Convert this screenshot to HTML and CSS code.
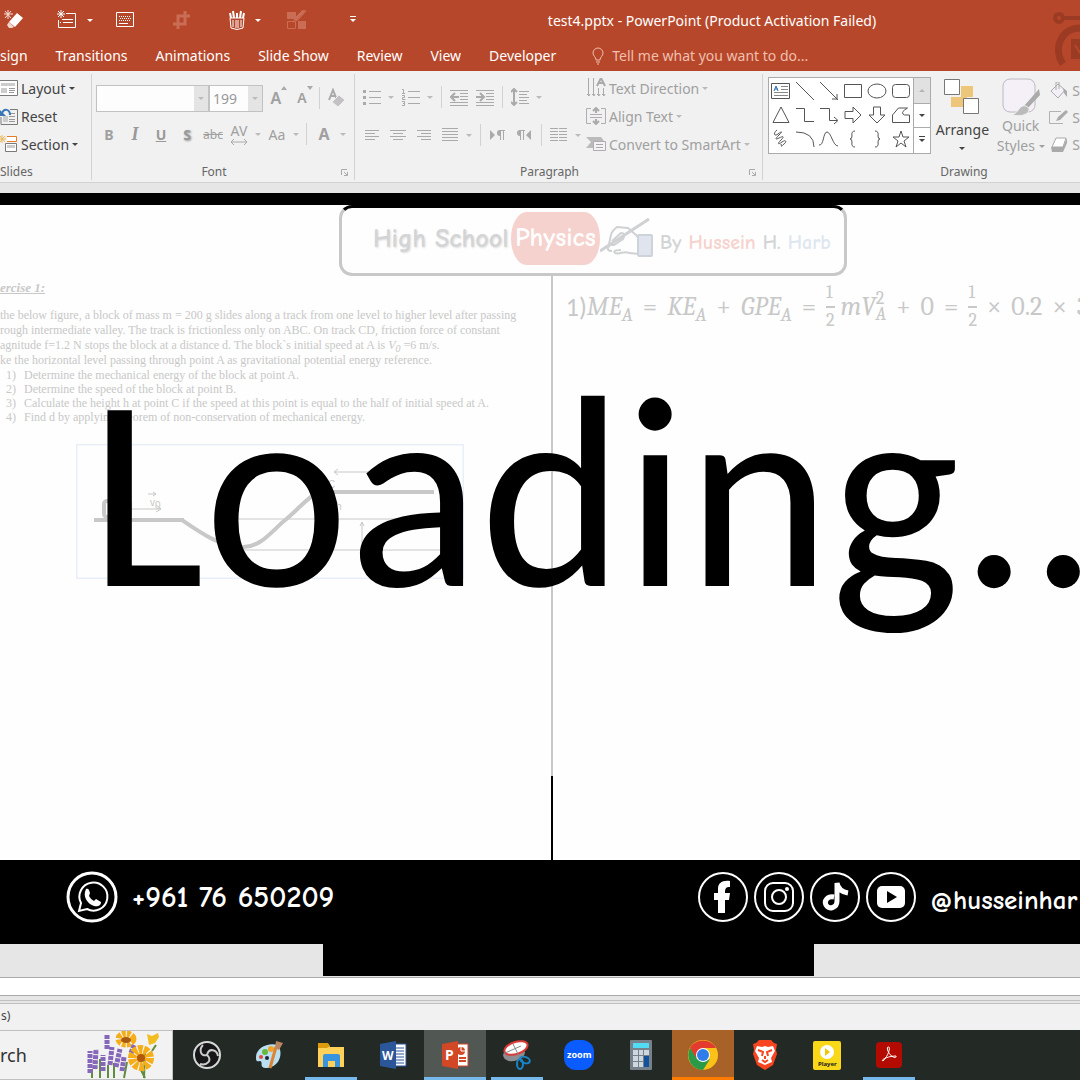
FILE: index.html
```html
<!DOCTYPE html>
<html lang="en">
<head>
    <meta charset="UTF-8">
    <meta name="viewport" content="width=device-width, initial-scale=1.0">
    <title>test4.pptx - PowerPoint</title>
    <link rel="stylesheet" href="styles.css">
</head>
<body>
    <header class="titlebar">
        <div class="quick-access">
            <button aria-label="Clear formatting"><svg width="20" height="20" viewBox="0 0 20 20"><path d="M5 0v9M1 4h9M2 1l6 7M8 1L2 8" stroke="#f6e3dd"/><path d="M14 3l6 5-8 9-6-5z" fill="#fff"/><path d="M6 12l5 5-2 1H6l-2-3z" fill="#f0d5cc"/></svg></button>
            <button class="new-slide" aria-label="New slide"><svg width="20" height="20" viewBox="0 0 20 20"><path d="M4 0v8M0 4h8M1 1l6 6M7 1L1 7" stroke="#fff"/><path d="M9 3.500h9.500v14h-17V10M5 9.500h11M6 12.500h10M3 12.500h1" fill="none" stroke="#fff"/></svg><i class="caret"></i></button>
            <button class="keyboard" aria-label="Keyboard"><svg width="18" height="16" viewBox="0 0 18 16"><path d="M.5.5h17v14H.5z" fill="none" stroke="#fff"/><path d="M3 4.500h12M4 6.500h11M3 8.500h12" stroke="#fff" stroke-dasharray="1 1"/><path d="M3 11.500h9" stroke="#fff"/></svg></button>
            <button class="crop" aria-label="Crop" disabled><svg width="18" height="18" viewBox="0 0 18 18"><path d="M0 13h12V0M5 18V5h12" fill="none" stroke="#c96d55" stroke-width="3"/></svg></button>
            <button class="pens" aria-label="Pens"><svg width="16" height="20" viewBox="0 0 16 20"><path d="M2 8L1 3M5 8L4 1M8 8V3M11 8l1-7M14 8l1-5" stroke="#fff" stroke-width="2"/><path d="M1 8h14l-1 10q-6 3-12 0z" fill="#b7472a" stroke="#fff"/><path d="M4 10v7M7 10v8M9 10v8M12 10v7" stroke="#fff"/></svg><i class="caret"></i></button>
            <button class="shapes" aria-label="Shape" disabled><svg width="20" height="20" viewBox="0 0 20 20"><path d="M0 2h9v7H0zM11 11h8v8h-8z" fill="#c96d55"/><path d="M.5 11.500h8v7h-8zM6 12l3-5 7-7 3 1-8 9z" fill="#b7472a" stroke="#c96d55"/><path d="M8 10l9-9" stroke="#c96d55" stroke-width="3"/></svg></button>
            <button class="customize" aria-label="Customize toolbar"><i class="caret lined"></i></button>
            <h1>test4.pptx - PowerPoint (Product Activation Failed)</h1>
        </div>
        <nav class="tabs">
            <a href="#">sign</a>
            <a href="#">Transitions</a>
            <a href="#">Animations</a>
            <a href="#">Slide Show</a>
            <a href="#">Review</a>
            <a href="#">View</a>
            <a href="#">Developer</a>
            <button class="tell-me"><svg width="12" height="18" viewBox="0 0 12 18"><path d="M4 13c0-3-3-4-3-7a5 5 0 0 1 10 0c0 3-3 4-3 7zM4 15h4M5 17h2" fill="none" stroke="#f0bfae"/></svg>Tell me what you want to do...</button>
        </nav>
        <svg class="circuit" width="30" height="56" viewBox="0 0 30 56"><g fill="none" stroke="#9c3b23" stroke-width="4"><circle cx="9" cy="7" r="4"/><path d="M13 7h17"/><path d="M13 53C3 39 10 17 30 17" stroke-width="7"/></g><path d="M21 28h9v20h-9z" fill="#9c3b23"/><path d="M25 34l5 8" stroke="#b7472a" stroke-width="2"/></svg>
    </header>

    <section class="ribbon">
        <div class="group slides">
            <div class="group-body">
                <button><svg width="18" height="16" viewBox="0 0 18 16"><path d="M0 .5h17.500v15H0" fill="#fff" stroke="#7a7a7a"/><path d="M1 3h14v3H1zM1 8h6v5H1z" fill="#ccc"/><path d="M9 8.500h6M9 10.500h6M9 12.500h5" stroke="#999"/></svg>Layout<i class="caret"></i></button>
                <button><svg width="18" height="17" viewBox="0 0 18 17"><path d="M10 1.500h7.500v15H1V9" fill="none" stroke="#7a7a7a"/><path d="M3 8h5v6H3z" fill="#ccc"/><path d="M10 5.500h5M9 8.500h6M9 11.500h6M9 13.500h6" stroke="#999"/><path d="M2 5c2-5 8-4 8 2" fill="none" stroke="#3a78b5" stroke-width="2"/><path d="M0 2v6h6z" fill="#3a78b5"/></svg>Reset</button>
                <button><svg width="18" height="18" viewBox="0 0 18 18"><path d="M2 0v8M0 1l5 6M5 1L0 7M0 4h6" stroke="#edb95c"/><path d="M7 1.500h9.500v5H7" fill="#fff" stroke="#e57b24"/><path d="M5.500 8.500h11v8h-11z" fill="#fff" stroke="#7a7a7a"/><path d="M7 10h8v3H7z" fill="#ccc"/></svg>Section<i class="caret"></i></button>
            </div>
            <h2>Slides</h2>
        </div>

        <div class="group font disabled">
            <div class="group-body">
                <div class="tool-row">
                    <span class="combo"><input type="text" class="font-name" aria-label="Font name"><button aria-label="Font list"><i class="caret"></i></button></span>
                    <span class="combo"><input type="text" class="font-size" aria-label="Font size" value="199"><button aria-label="Size list"><i class="caret"></i></button></span>
                    <button class="tool grow">A<svg width="6" height="4" viewBox="0 0 6 4"><path d="M0 4l3-4 3 4z" fill="#aaa"/></svg></button>
                    <button class="tool grow shrink">A<svg width="6" height="4" viewBox="0 0 6 4"><path d="M0 0l3 4 3-4z" fill="#aaa"/></svg></button>
                    <span class="sep"></span>
                    <button class="tool" aria-label="Clear"><svg width="18" height="20" viewBox="0 0 18 20"><path d="M1 12L5 2l4 10M3 8h5" fill="none" stroke="#aaa" stroke-width="2"/><path d="M11 7l6 5-7 7-6-5z" fill="#c4c1c5" stroke="#f0f0f0"/></svg></button>
                </div>
                <div class="tool-row">
                    <button class="tool"><b>B</b></button>
                    <button class="tool italic"><b>I</b></button>
                    <button class="tool underline"><b>U</b></button>
                    <button class="tool shadow"><b>S</b></button>
                    <button class="tool strike">abc</button>
                    <button class="tool spacing">AV<svg width="18" height="6" viewBox="0 0 18 6"><path d="M1 3h16M4 0L1 3l3 3M14 0l3 3-3 3" fill="none" stroke="#aaa"/></svg></button>
                    <i class="caret"></i>
                    <button class="tool">Aa</button>
                    <i class="caret"></i>
                    <span class="sep"></span>
                    <button class="tool big"><b>A</b></button>
                    <i class="caret"></i>
                </div>
            </div>
            <h2>Font</h2>
            <button class="launcher" aria-label="Font settings"><svg width="7" height="7" viewBox="0 0 7 7"><path d="M.5 6V.5H6M3 3l3 3M6.500 3v3.500H3" fill="none" stroke="#aaa"/></svg></button>
        </div>

        <div class="group paragraph disabled">
            <div class="group-body">
                <div class="para-tools">
                    <div class="tool-row">
                        <button class="tool" aria-label="Bullets"><svg width="18" height="17" viewBox="0 0 18 17"><path d="M6 2.500h12M6 8.500h12M6 14.500h12" stroke="#aaa"/><path d="M0 1h3v3H0zM0 7h3v3H0zM0 13h3v3H0z" fill="#aaa"/></svg></button>
                        <i class="caret"></i>
                        <button class="tool" aria-label="Numbering"><svg width="18" height="18" viewBox="0 0 18 18"><path d="M6 3.500h12M6 9.500h12M6 15.500h12M0 1.500h1.500v4M0 5.500h3M0 7.500h2.500v2H.5v2h3M0 13.500h2.500v4H0M1 15.500h2" fill="none" stroke="#aaa"/></svg></button>
                        <i class="caret"></i>
                        <span class="sep"></span>
                        <button class="tool" aria-label="Outdent"><svg width="18" height="17" viewBox="0 0 18 17"><path d="M0 1.500h18M10 4.500h8M10 7.500h8M10 10.500h8M0 13.500h18M0 16.500h18" stroke="#aaa"/><path d="M9 8H2M5 4L1 8l4 4" fill="none" stroke="#aaa" stroke-width="2"/></svg></button>
                        <button class="tool" aria-label="Indent"><svg width="18" height="17" viewBox="0 0 18 17"><path d="M0 1.500h18M10 4.500h8M10 7.500h8M10 10.500h8M0 13.500h18M0 16.500h18" stroke="#aaa"/><path d="M0 8h7M4 4l4 4-4 4" fill="none" stroke="#aaa" stroke-width="2"/></svg></button>
                        <span class="sep"></span>
                        <button class="tool" aria-label="Line spacing"><svg width="18" height="18" viewBox="0 0 18 18"><path d="M8 3.500h10M8 6.500h8M8 9.500h10M8 12.500h8M8 15.500h10" stroke="#aaa"/><path d="M3 1v16M0 4l3-3 3 3M0 14l3 3 3-3" fill="none" stroke="#aaa" stroke-width="2"/></svg></button>
                        <i class="caret"></i>
                    </div>
                    <div class="tool-row">
                        <button class="tool" aria-label="Align left"><svg width="14" height="12" viewBox="0 0 14 12"><path d="M0 1.500h14M0 4.500h10M0 7.500h14M0 10.500h10" stroke="#aaa"/></svg></button>
                        <button class="tool" aria-label="Center"><svg width="16" height="12" viewBox="0 0 16 12"><path d="M0 1.500h16M3 4.500h10M0 7.500h16M3 10.500h10" stroke="#aaa"/></svg></button>
                        <button class="tool" aria-label="Align right"><svg width="14" height="12" viewBox="0 0 14 12"><path d="M0 1.500h14M4 4.500h10M0 7.500h14M4 10.500h10" stroke="#aaa"/></svg></button>
                        <button class="tool" aria-label="Justify"><svg width="16" height="14" viewBox="0 0 16 14"><path d="M0 .5h16M0 3.500h16M0 6.500h16M0 9.500h16M0 12.500h16" stroke="#aaa"/></svg></button>
                        <i class="caret"></i>
                        <span class="sep"></span>
                        <button class="tool" aria-label="Left to right"><svg width="16" height="12" viewBox="0 0 16 12"><path d="M0 1l5 5-5 5zM9 1h6v1H9zM10 1v6a3 3 0 0 1 0-6z" fill="#aaa"/><path d="M10.500 1v10M13.500 1v10" stroke="#aaa"/></svg></button>
                        <button class="tool" aria-label="Right to left"><svg width="16" height="12" viewBox="0 0 16 12"><path d="M15 1l-5 5 5 5zM3 1h6v1H3zM4 1v6a3 3 0 0 1 0-6z" fill="#aaa"/><path d="M4.500 1v10M7.500 1v10" stroke="#aaa"/></svg></button>
                        <span class="sep"></span>
                        <button class="tool" aria-label="Columns"><svg width="18" height="14" viewBox="0 0 18 14"><path d="M0 .5h8M0 3.500h8M0 6.500h8M0 9.500h8M0 12.500h8M9 .5h8M9 3.500h8M9 6.500h8M9 9.500h8M9 12.500h8" stroke="#aaa"/></svg></button>
                        <i class="caret"></i>
                    </div>
                </div>
                <div class="text-tools">
                    <button><svg width="20" height="20" viewBox="0 0 20 20"><path d="M2.500 0v18M7.500 0v18M12.500 10v8M17.500 10v8M1 16l2 2 1-2M6 16l2 2 1-2M11 16l2 2 1-2M16 16l2 2 1-2" fill="none" stroke="#aaa"/><path d="M11 8l4-8 4 8M12 5h6" fill="none" stroke="#aaa" stroke-width="2"/></svg>Text Direction<i class="caret"></i></button>
                    <button><svg width="20" height="18" viewBox="0 0 20 18"><path d="M5 1.500H.5v15H5M15 1.500h4.500v15H15M4 7.500h12M4 10.500h12" fill="none" stroke="#b1abb3"/><path d="M10 1v5M7 4l3-3 3 3M10 12v5M7 14l3 3 3-3" fill="none" stroke="#aaa" stroke-width="2"/></svg>Align Text<i class="caret"></i></button>
                    <button><svg width="20" height="16" viewBox="0 0 20 16"><path d="M0 1h15l3 4H8v7H0l5-6z" fill="#bbb"/><path d="M7.500 5.500h12v9h-12z" fill="#f6f0f7" stroke="#b1abb3"/><path d="M10 8.500h7M10 11.500h7" stroke="#aaa"/></svg>Convert to SmartArt<i class="caret"></i></button>
                </div>
            </div>
            <h2>Paragraph</h2>
            <button class="launcher" aria-label="Paragraph settings"><svg width="7" height="7" viewBox="0 0 7 7"><path d="M.5 6V.5H6M3 3l3 3M6.500 3v3.500H3" fill="none" stroke="#aaa"/></svg></button>
        </div>

        <div class="group drawing">
            <div class="group-body">
                <div class="gallery">
                    <button aria-label="Text box"><svg width="20" height="18" viewBox="0 0 20 18"><path d="M.5 1.500h18v15H.5z" fill="#fff" stroke="#555"/><path d="M3 9l2-5 2 5M4 7h3" fill="none" stroke="#2a6db5"/><path d="M10 4.500h7M10 7.500h7M3 10.500h14M3 13.500h14" stroke="#888"/></svg></button>
                    <button aria-label="Line"><svg width="20" height="20" viewBox="0 0 20 20"><path d="M1 1l18 18"/></svg></button>
                    <button aria-label="Arrow"><svg width="20" height="20" viewBox="0 0 20 20"><path d="M1 1l18 18M18 13v5h-5"/></svg></button>
                    <button aria-label="Rectangle"><svg width="20" height="20" viewBox="0 0 20 20"><path d="M1.500 3.500h17v13h-17z"/></svg></button>
                    <button aria-label="Oval"><svg width="20" height="20" viewBox="0 0 20 20"><ellipse cx="10" cy="10" rx="9" ry="7"/></svg></button>
                    <button aria-label="Rounded rectangle"><svg width="20" height="20" viewBox="0 0 20 20"><rect x="1.500" y="3.500" width="17" height="13" rx="3"/></svg></button>
                    <button aria-label="Triangle"><svg width="20" height="20" viewBox="0 0 20 20"><path d="M10 2l8 15.500H2z"/></svg></button>
                    <button aria-label="Elbow"><svg width="20" height="20" viewBox="0 0 20 20"><path d="M1 3.500h8.500v13H19"/></svg></button>
                    <button aria-label="Elbow arrow"><svg width="20" height="20" viewBox="0 0 20 20"><path d="M1 3.500h9.500v12H18M15 12l4 3.500-4 3.500"/></svg></button>
                    <button aria-label="Right arrow"><svg width="20" height="20" viewBox="0 0 20 20"><path d="M2 6.500h8V2l8 8-8 8v-4.500H2z"/></svg></button>
                    <button aria-label="Down arrow"><svg width="20" height="20" viewBox="0 0 20 20"><path d="M6.500 2v8H2l8 8 8-8h-4.500V2z"/></svg></button>
                    <button aria-label="Freeform"><svg width="20" height="20" viewBox="0 0 20 20"><path d="M1.500 17.500V10l6-7h9l-3 2q-4 3 0 5h5v7.500z"/></svg></button>
                    <button aria-label="Scribble"><svg width="20" height="20" viewBox="0 0 20 20"><path d="M6 1C2 4 3 8 7 5s5-3 1 1-4 5 0 3 6-2 2 2-3 5 1 2 5 0 2 2-2 4-3 0"/></svg></button>
                    <button aria-label="Arc"><svg width="20" height="20" viewBox="0 0 20 20"><path d="M1 3q18 0 18 15"/></svg></button>
                    <button aria-label="Curve"><svg width="20" height="20" viewBox="0 0 20 20"><path d="M0 16C5 17 4 3 8 3s6 14 11 14"/></svg></button>
                    <button aria-label="Left brace"><svg width="20" height="20" viewBox="0 0 20 20"><path d="M12 2q-4 0-3 5 0 3-2 3 2 0 2 3-1 5 3 5"/></svg></button>
                    <button aria-label="Right brace"><svg width="20" height="20" viewBox="0 0 20 20"><path d="M8 2q4 0 3 5 0 3 2 3-2 0-2 3 1 5-3 5"/></svg></button>
                    <button aria-label="Star"><svg width="20" height="20" viewBox="0 0 20 20"><path d="M10 2l2 6h6l-5 4 2 6-5-4-5 4 2-6-5-4h6z"/></svg></button>
                </div>
                <div class="gallery-scroll">
                    <button aria-label="Up" class="off"><i class="caret up"></i></button>
                    <button aria-label="Down"><i class="caret"></i></button>
                    <button aria-label="More"><i class="caret lined"></i></button>
                </div>
                <button class="large"><svg width="36" height="36" viewBox="0 0 36 36"><path d="M17 7h12v11h-6v10H7V18h10z" fill="#edc67a"/><path d="M.5.500h15v15H.5zM19.500 19.500h15v15h-15z" fill="#fff" stroke="#777"/></svg>Arrange<i class="caret"></i></button>
                <button class="large off"><svg width="38" height="38" viewBox="0 0 38 38"><rect x="1" y="1" width="32" height="33" rx="7" fill="#f5f0f7" stroke="#beb8c1"/><path d="M37 11L22 28l3 3 13-14z" fill="#aaa"/><path d="M24 28c-7-2-7 7-14 9 8 2 18 0 17-7z" fill="#bbb" stroke="#f0f0f0"/></svg><span>Quick<br>Styles <i class="caret"></i></span></button>
                <div class="shape-tools disabled">
                    <button><svg width="20" height="18" viewBox="0 0 20 18"><path d="M2 9l7-7 7 6-7 8zM7 8V0h3v7" fill="#f5f0f7" stroke="#aaa"/><path d="M14 6l4 3v6l-3-4z" fill="#aaa"/></svg>S</button>
                    <button><svg width="20" height="18" viewBox="0 0 20 18"><path d="M12 2.500H.5v12H14" fill="none" stroke="#b5afb8"/><path d="M7 12l2-4 8-7 2 2-8 8z" fill="#aaa"/></svg>S</button>
                    <button><svg width="20" height="18" viewBox="0 0 20 18"><path d="M7 2h10l-3 9H3z" fill="#fff" stroke="#aaa"/><path d="M2 11h12l4-9v5l-4 9H3z" fill="#aaa"/></svg>S</button>
                </div>
            </div>
            <h2>Drawing</h2>
        </div>
    </section>

    <main class="workspace">
        <div class="slide">
            <div class="banner">
                <span class="school">High School</span>
                <span class="physics">Physics</span>
                <svg width="56" height="42" viewBox="0 0 56 42"><g fill="none" stroke="#d0d1d3"><path d="M9 26c2-8 1-12 8-17l11 1 8 7 3 4v15l-10-1c-5-3-9 2-14 0-3-3 4-3 6-3M12 23l9-8q5 0 2 6l-9 6H8M18 22l4-3M10 27c-4 4-2 6 2 6" stroke-width="2"/><path d="M0 33L49 1" stroke-width="3"/></g><rect x="38" y="17" width="14" height="21" rx="1" fill="#dfe4ee" stroke="#ced2da" stroke-width="2"/></svg>
                <span class="author">By <em>Hussein</em> H. <strong>Harb</strong></span>
            </div>
            <div class="columns">
                <section class="exercise">
                    <h3>ercise 1:</h3>
                    <p>the below figure, a block of mass m = 200 g slides along a track from one level to higher level after passing<br>
                    rough intermediate valley. The track is frictionless only on ABC. On track CD, friction force of constant<br>
                    agnitude f=1.2 N stops the block at a distance d. The block`s initial speed at A is <i>V<sub>0</sub></i> =6 m/s.<br>
                    ke the horizontal level passing through point A as gravitational potential energy reference.</p>
                    <ol>
                        <li>Determine the mechanical energy of the block at point A.</li>
                        <li>Determine the speed of the block at point B.</li>
                        <li>Calculate the height h at point C if the speed at this point is equal to the half of initial speed at A.</li>
                        <li>Find d by applying theorem of non-conservation of mechanical energy.</li>
                    </ol>
                    <svg class="track" width="388" height="135" viewBox="0 0 388 135">
                        <path d="M.5.500h387v134H.5z" fill="none" stroke="#e9eff8" stroke-width="2"/>
                        <g fill="none" stroke="#c8c8c8">
                            <path d="M140 75h215M155 106h228M258 28h60M262 25l-4 3 4 3M286 105V78M284 82l2-4 2 4M54 65h31M80 61l5 4-5 3M72 50h8M77 48l3 2-3 2"/>
                            <path d="M18 76h90M255 48h103" stroke-width="4"/>
                            <path d="M106 76c22 15 38 26 60 27 18 1 30-16 42-26 15-12 25-26 36-29h20" stroke-width="4"/>
                            <rect x="28" y="57" width="26" height="16" rx="3" stroke-width="4"/>
                        </g>
                        <g fill="#c8c8c8">
                            <text x="74" y="62">v<tspan dy="3">0</tspan></text>
                            <text x="252" y="44">C</text>
                            <text x="260" y="66">h</text>
                        </g>
                    </svg>
                </section>
                <div class="divider"></div>
                <section class="solution">
                    <div class="formula">
                        <span class="num">1)</span><i>ME<sub>A</sub></i>
                        <span class="op">=</span><i>KE<sub>A</sub></i>
                        <span class="op">+</span><i>GPE<sub>A</sub></i>
                        <span class="op">=</span><span class="frac"><span>1</span><span>2</span></span>
                        <i class="mv">mV<span class="supsub"><span>2</span><span>A</span></span></i>
                        <span class="op">+</span><span>0</span>
                        <span class="op">=</span><span class="frac"><span>1</span><span>2</span></span>
                        <span class="op">×</span><span>0.2</span>
                        <span class="op">×</span><span>3</span>
                    </div>
                </section>
            </div>
            <footer class="contacts">
                <svg width="52" height="52" viewBox="0 0 52 52"><g fill="none" stroke="#fff"><circle cx="26" cy="26" r="24" stroke-width="3"/><path d="M13 40l2-8a14 14 0 1 1 6 6z" stroke-width="2"/></g><path d="M20 18c2-1 3 0 4 4l-1 3q2 4 5 5l2-2 5 3c0 4-4 5-7 4-6-2-12-9-8-17z" fill="#fff"/></svg>
                <span class="phone">+961 76 650209</span>
                <div class="social">
                    <svg width="50" height="52" viewBox="0 0 50 52"><circle cx="25" cy="26" r="24"/><path class="solid" d="M20 42V29h-4v-7h4v-4c0-6 4-9 12-8v6c-4 0-5 1-5 6h5l-1 7h-4v13z"/></svg>
                    <svg width="50" height="52" viewBox="0 0 50 52"><circle cx="25" cy="26" r="24"/><rect x="11" y="12" width="28" height="28" rx="8"/><circle cx="25" cy="26" r="7"/><circle class="solid" cx="33" cy="18" r="2"/></svg>
                    <svg width="50" height="52" viewBox="0 0 50 52"><circle cx="25" cy="26" r="24"/><path class="note" d="M24 26c-7-1-10 4-8 8 3 5 11 3 11-4V12c1 6 5 9 11 10"/></svg>
                    <svg width="50" height="52" viewBox="0 0 50 52"><circle cx="25" cy="26" r="24"/><rect class="solid" x="11" y="15" width="28" height="22" rx="5"/><path d="M21 20v12l10-6z" fill="#000" stroke="none"/></svg>
                </div>
                <span class="handle">@husseinhar</span>
            </footer>
            <div class="loading">Loading..</div>
        </div>
        <div class="shelf"></div>
    </main>
    <div class="notes"></div>
    <div class="status">s)</div>

    <footer class="taskbar">
        <div class="search">
            <span>rch</span>
            <svg width="80" height="48" viewBox="0 0 80 48">
                <g stroke="#5f8c3e" stroke-width="2" fill="none"><path d="M6 47V38M14 47V28M22 47V34M28 32V47M38 47l3-16M58 47l1-27M66 20l4-6M59 47l-4-8"/></g>
                <g stroke="#8566b8" stroke-width="5" stroke-dasharray="4 1" fill="none"><path d="M4 42V20M9 38l1-20M17 40V24M21 18V3M24 34l2-18M30 36l4-18M36 40l2-14M45 22l3-8"/></g>
                <g stroke="#f5ad18" fill="none"><ellipse cx="40" cy="8" rx="6" ry="4" stroke-width="9" stroke-dasharray="3 1"/><circle cx="55" cy="27" r="8" stroke-width="10" stroke-dasharray="4 1"/></g>
                <ellipse cx="40" cy="9" rx="5" ry="3" fill="#a85a12"/><circle cx="55" cy="27" r="4" fill="#b35a0a"/>
                <path d="M61 3l5 2 6-3 1 4-4 6-6 2z" fill="#f2bd20"/>
            </svg>
        </div>
        <button aria-label="OBS Studio"><svg width="28" height="28" viewBox="0 0 28 28"><circle cx="14" cy="14" r="13" fill="#171719" stroke="#d8d8d8" stroke-width="2"/><path d="M14 14C7 16 6 8 10 4M14 14c2-8 10-5 11 1M14 14c6 5 0 11-7 9" fill="none" stroke="#ccc" stroke-width="2"/></svg></button>
        <button aria-label="Paint"><svg width="30" height="30" viewBox="0 0 30 30"><path d="M2 17C2 8 14 2 24 5c6 9 1 22-11 23-9 0-3-6-7-7-4 1-4-1-4-4z" fill="#b9dff0"/><circle cx="7" cy="17" r="2" fill="#e24a3b"/><circle cx="11" cy="12" r="3" fill="#65b83f"/><circle cx="17" cy="9" r="3" fill="#f2a32b"/><circle cx="13" cy="18" r="2" fill="#223"/><path d="M16 28l6-21" stroke="#dc8432" stroke-width="3"/><path d="M21 8l1-7 7 2-4 7z" fill="#ba8560"/></svg></button>
        <button aria-label="File Explorer" class="open"><svg width="28" height="26" viewBox="0 0 28 26"><path d="M1 2h10l2 3h14v20H1z" fill="#ffd159"/><path d="M1 1h10l2 3-3 2H1z" fill="#dc9b0c"/><path d="M6 25V14q0-2 2-2h13q2 0 2 2v11h-5v-6h-7v6z" fill="#3994df"/></svg></button>
        <button aria-label="Word" class="app word"><svg width="28" height="28" viewBox="0 0 28 28"><path d="M15 3h12v22H15z" fill="#fff" stroke="#2b579a"/><path d="M17 7h8M17 10h8M17 13h8M17 16h8M17 19h8M17 22h8" stroke="#2b579a"/><path d="M1 3l16-3v28L1 25z" fill="#2b579a"/><text x="3" y="19">W</text></svg></button>
        <button aria-label="PowerPoint" class="app active"><svg width="28" height="28" viewBox="0 0 28 28"><path d="M15 3h12v22H15z" fill="#fff" stroke="#d24726"/><path d="M18 17h7M18 20h7" stroke="#d24726" stroke-width="2"/><circle cx="20" cy="10" r="4" fill="#d24726"/><path d="M20 10V6M20 10h4" stroke="#fff"/><path d="M1 3l16-3v28L1 25z" fill="#d24726"/><text x="4" y="19">P</text></svg></button>
        <button aria-label="Snipping Tool" class="open"><svg width="30" height="30" viewBox="0 0 30 30"><ellipse cx="12" cy="14" rx="11" ry="7" fill="#8d8d92" transform="rotate(-12 12 14)"/><ellipse cx="14" cy="8" rx="12" ry="6" fill="#fff" stroke="#d93b39" stroke-width="2" transform="rotate(-18 14 8)"/><path d="M11 4l8 16M3 13l16-7" stroke="#888"/><g fill="none" stroke="#1785c7" stroke-width="2"><ellipse cx="23" cy="20" rx="5" ry="3" transform="rotate(20 23 20)"/><ellipse cx="18" cy="24" rx="3" ry="5"/></g></svg></button>
        <button aria-label="Zoom" class="zoom"><svg width="30" height="30" viewBox="0 0 30 30"><rect width="30" height="30" rx="12" fill="#0b5cff"/><text x="3" y="18">zoom</text></svg></button>
        <button aria-label="Calculator"><svg width="24" height="30" viewBox="0 0 24 30"><rect x="1" width="22" height="30" rx="1" fill="#76818c"/><path d="M4 3h16v5H4z" fill="#50dcf5"/><path d="M4 10h5v5H4zM10 10h4v5h-4zM15 10h5v5h-5zM4 16h5v5H4zM10 16h4v5h-4zM4 22h5v5H4zM10 22h4v5h-4z" fill="#cdd7df"/><path d="M15 16h5v11h-5z" fill="#12529a"/></svg></button>
        <button aria-label="Chrome" class="alert"><svg width="30" height="30" viewBox="0 0 30 30"><circle cx="15" cy="15" r="15" fill="#fbc116"/><path d="M2 8a15 15 0 0 1 26 0H15l-7 11z" fill="#e33b2e"/><path d="M2 8a15 15 0 0 0 13 22l7-11-7 3-6-3z" fill="#299a48"/><circle cx="15" cy="15" r="7" fill="#fff"/><circle cx="15" cy="15" r="6" fill="#2f7de9"/></svg></button>
        <button aria-label="Brave"><svg width="26" height="30" viewBox="0 0 26 30"><path d="M7 0h12l3 3 3 1-1 6 1 4-4 11-8 5-8-5L1 14l1-4-1-6 3-1z" fill="#f8441f"/><path d="M5 6l5 1 3-1 3 1 5-1 2 5-4 7 1 4-7 3-7-3 1-4-4-7z" fill="#fff"/><path d="M6 10l5 2-1 4M20 10l-5 2 1 4M10 20l3 2 3-2M13 16v3" fill="none" stroke="#f8441f" stroke-width="2"/></svg></button>
        <button aria-label="Player" class="player"><svg width="28" height="29" viewBox="0 0 28 29"><rect width="28" height="29" rx="2" fill="#f9d719"/><circle cx="14" cy="11" r="7" fill="#fff"/><path d="M12 7v8l5-4z" fill="#f0c800"/><text x="5" y="25">Player</text></svg></button>
        <button aria-label="Acrobat" class="open"><svg width="26" height="27" viewBox="0 0 26 27"><rect width="26" height="26" rx="4" fill="#b30b00"/><path d="M12 5c3-1 1 8-5 14-3-1 5-5 13-5 1 3-5 1-7-3-2-3-2-6-1-6z" fill="none" stroke="#fff"/></svg></button>
    </footer>
</body>
</html>
```
FILE: styles.css
```css
* {
    box-sizing: border-box;
}
body {
    margin: 0;
    font-family: "Noto Sans", "Segoe UI", sans-serif;
    font-size: 14px;
    color: #444;
    background-color: #e6e6e6;
    overflow-x: hidden;
}
button {
    font: inherit;
    color: inherit;
    background: none;
    border: none;
    padding: 0;
    display: flex;
    align-items: center;
    cursor: pointer;
    white-space: nowrap;
}
svg {
    flex: none;
    display: block;
}
h1, h2, h3, p, ol {
    margin: 0;
    font-weight: normal;
}
.caret {
    flex: none;
    display: inline-block;
    border: 3px solid transparent;
    border-top-color: currentColor;
    border-bottom: 0;
}
.caret.up {
    border-top: 0;
    border-bottom: 3px solid #b5b5b5;
}
.caret.lined {
    position: relative;
}
.caret.lined::before {
    content: "";
    position: absolute;
    left: -3px;
    top: -6px;
    width: 6px;
    height: 1px;
    background: currentColor;
}

/* title bar and tabs */
.titlebar {
    position: relative;
    background: #b7472a;
    color: #fff;
    overflow: hidden;
}
.quick-access {
    display: flex;
    align-items: center;
    height: 40px;
    padding-left: 3px;
}
.quick-access button {
    gap: 10px;
}
.new-slide {
    margin-left: 34px;
}
.keyboard {
    margin-left: 23px;
}
.crop {
    margin-left: 39px;
}
.pens {
    margin-left: 38px;
}
.shapes {
    margin-left: 26px;
}
.customize {
    margin-left: 43px;
}
.titlebar h1 {
    flex: 1;
    text-align: center;
    font-size: 14px;
    padding-left: 10px;
    padding-right: 22px;
}
.tabs {
    display: flex;
    align-items: center;
    height: 31px;
    gap: 28px;
    font-size: 14px;
}
.tabs a {
    color: #fff;
    text-decoration: none;
}
.tell-me {
    gap: 8px;
    margin-left: 8px;
    color: #f0bfae;
}
.circuit {
    position: absolute;
    right: 0;
    top: 11px;
}

/* ribbon */
.ribbon {
    display: flex;
    height: 112px;
    padding-top: 3px;
    background: #f1f1f1;
    border-bottom: 1px solid #d2d2d2;
}
.group {
    position: relative;
    display: flex;
    flex-direction: column;
    justify-content: space-between;
    flex: none;
    height: 106px;
    border-right: 1px solid #d2d2d2;
}
.group h2 {
    font-size: 12px;
    line-height: 16px;
    text-align: center;
    color: #666;
}
.group-body {
    display: flex;
}
.disabled {
    color: #a0a0a0;
}
.slides {
    width: 92px;
}
.slides .group-body, .text-tools, .shape-tools {
    display: flex;
    flex-direction: column;
}
.slides button, .text-tools button, .shape-tools button {
    height: 28px;
    gap: 3px;
}
.slides h2 {
    text-align: left;
}
.font {
    width: 263px;
    padding-left: 4px;
}
.font h2 {
    padding-right: 22px;
}
.font .group-body {
    flex-direction: column;
    padding-top: 10px;
}
.tool-row {
    display: flex;
    align-items: center;
    height: 28px;
}
.font .tool-row + .tool-row {
    margin-top: 8px;
}
.tool {
    position: relative;
    justify-content: center;
    width: 26px;
    height: 24px;
}
.sep {
    width: 1px;
    height: 22px;
    margin: 0 4px;
    background: #d2d2d2;
}
.combo {
    display: flex;
    height: 27px;
    border: 1px solid #c2c2c2;
    background: #fff;
}
.combo input {
    border: 0;
    padding: 0 0 0 3px;
    font: inherit;
    color: #999;
    outline: none;
    background: #fdfdfd;
}
.combo button {
    width: 14px;
    background: #e4e4e4;
    color: #bbb;
    justify-content: center;
}
.font-name {
    width: 97px;
}
.font-size {
    width: 38px;
}
.grow {
    margin-left: 6px;
    width: 20px;
    font-size: 16px;
    align-items: flex-start;
    line-height: 24px;
    font-weight: 600;
}
.shrink {
    font-size: 14px;
}
.italic {
    font-family: "Liberation Serif", serif;
    font-style: italic;
    font-size: 18px;
}
.underline {
    text-decoration: underline;
}
.shadow {
    text-shadow: 1px 1px 2px #999;
}
.strike {
    text-decoration: line-through;
    font-size: 12px;
}
.spacing {
    flex-direction: column;
    line-height: 16px;
}
.font .italic, .underline, .shadow {
    color: #999;
}
.big {
    font-size: 16px;
}
.font .caret {
    margin: 0 3px;
    color: #bbb;
}
.launcher {
    position: absolute;
    right: 6px;
    bottom: 4px;
}
.paragraph {
    width: 408px;
    padding-left: 4px;
}
.para-tools {
    width: 227px;
    padding-top: 9px;
}
.para-tools .tool-row + .tool-row {
    margin-top: 10px;
}
.para-tools .caret {
    margin: 0 4px 0 3px;
}
.paragraph .caret {
    color: #bbb;
}
.paragraph h2 {
    padding-right: 22px;
}
.drawing {
    flex: 1;
    min-width: 317px;
    border-right: 0;
    padding-left: 5px;
}
.drawing h2 {
    padding-left: 80px;
}
.drawing .group-body {
    padding-top: 3px;
}
.gallery {
    display: grid;
    grid-template-columns: repeat(6, 24px);
    grid-template-rows: repeat(3, 24px);
    width: 147px;
    height: 77px;
    padding-top: 1px;
    border: 1px solid #ababab;
    background: #fff;
}
.gallery button {
    justify-content: center;
}
.gallery svg {
    fill: none;
    stroke: #555;
}
.gallery-scroll {
    display: grid;
    grid-template-rows: 26px 24px 27px;
    width: 17px;
}
.gallery-scroll button {
    justify-content: center;
    border: 1px solid #ababab;
    border-left: 0;
    border-bottom: 0;
    background: #fff;
}
.gallery-scroll button:last-child {
    border-bottom: 1px solid #ababab;
}
.gallery-scroll .off {
    background: #e1e1e1;
}
.large {
    flex-direction: column;
    width: 56px;
    height: 80px;
    margin-left: 4px;
    padding-top: 2px;
}
.large .caret {
    margin-top: 8px;
}
.large.off {
    width: 54px;
    padding-top: 1px;
    color: #a0a0a0;
    line-height: 20px;
}
.large.off .caret {
    margin: 0 0 3px;
}
.large:not(.off) svg {
    margin-bottom: 5px;
}
.shape-tools {
    margin-left: 2px;
}
.shape-tools button {
    height: 27px;
}

/* slide */
.workspace {
    padding-top: 10px;
    border-bottom: 1px solid #ababab;
}
.slide {
    position: relative;
    background: #fefefe;
    border-top: 12px solid #000;
    overflow: hidden;
}
.banner {
    display: flex;
    align-items: center;
    width: 508px;
    height: 71px;
    margin-left: 339px;
    padding: 0 0 4px 31px;
    border: 3px solid #c8c8c8;
    border-top-color: #000;
    border-radius: 13px;
    font-family: "Comic Sans MS", "Comic Neue", "Noto Sans", sans-serif;
    font-weight: bold;
    white-space: nowrap;
}
.school {
    width: 138px;
    font-size: 26px;
    color: #d3d4d6;
    text-shadow: 1px 1px 2px #ddd;
}
.physics {
    width: 89px;
    height: 53px;
    line-height: 53px;
    text-align: center;
    border-radius: 16px / 27px;
    background: #f6d2ce;
    color: #fff;
    font-size: 26px;
}
.author {
    padding-top: 8px;
    margin-left: 4px;
    font-size: 20px;
    color: #d3d4d6;
}
.author em {
    font-style: normal;
    color: #f6d2ce;
}
.author strong {
    color: #dfe6ef;
}
.columns {
    display: grid;
    grid-template-columns: 51% 2px 1fr;
    min-height: 584px;
}
.divider {
    background: linear-gradient(#c8c8c8 500px, #000 500px);
}
.exercise {
    font-family: "Liberation Serif", serif;
    font-size: 12px;
    color: #c8c8c8;
    white-space: nowrap;
}
.exercise h3 {
    padding-top: 4px;
    font-size: 13px;
    font-weight: bold;
    font-style: italic;
    text-decoration: underline;
    line-height: 16px;
}
.exercise p {
    margin-top: 12px;
    line-height: 15px;
}
.exercise sub {
    line-height: 0;
}
.exercise ol {
    padding-left: 24px;
    line-height: 14px;
    list-style: none;
    counter-reset: item;
}
.exercise li {
    counter-increment: item;
}
.exercise li::before {
    content: counter(item) ")";
    display: inline-block;
    width: 18px;
    margin-left: -18px;
}
.track {
    margin: 20px 0 0 76px;
    font-family: "Liberation Sans", sans-serif;
    font-size: 10px;
}
.solution {
    overflow: hidden;
    padding: 8px 0 0 13px;
}
.formula {
    display: flex;
    align-items: center;
    gap: 10px;
    height: 46px;
    font-family: Cambria, "Liberation Serif", serif;
    font-size: 26px;
    color: #c8c8c8;
    white-space: nowrap;
}
.formula sub {
    font-size: 19px;
    line-height: 0;
}
.num {
    font-family: Calibri, Carlito, Lato, sans-serif;
    margin-right: -10px;
}
.frac, .supsub {
    display: inline-flex;
    flex-direction: column;
    font-size: 18px;
    line-height: 20px;
}
.frac span:first-child {
    border-bottom: 2px solid #c8c8c8;
    padding-bottom: 3px;
}
.frac span:last-child {
    padding-top: 3px;
}
.mv {
    display: flex;
    align-items: center;
    margin-left: -4px;
}
.supsub span:first-child {
    font-style: normal;
}
.supsub {
    line-height: 16px;
}
.contacts {
    display: flex;
    align-items: center;
    height: 84px;
    padding: 0 0 10px 66px;
    background: #000;
    color: #fff;
    font-family: "Comic Sans MS", "Comic Neue", "Noto Sans", sans-serif;
    font-weight: bold;
    font-size: 27px;
    white-space: nowrap;
}
.phone {
    flex: none;
    width: 580px;
    padding-left: 14px;
    font-size: 30px;
}
.social {
    display: flex;
    flex: none;
    gap: 6px;
}
.social svg {
    fill: none;
    stroke: #fff;
    stroke-width: 2px;
}
.social .solid {
    fill: #fff;
    stroke: none;
}
.social .note {
    stroke-width: 5px;
}
.handle {
    padding: 6px 0 0 14px;
}
.loading {
    position: absolute;
    left: 89px;
    top: 138px;
    font-family: Calibri, Carlito, Lato, sans-serif;
    font-size: 274px;
    line-height: 300px;
    color: #000;
    white-space: nowrap;
}
.shelf {
    width: 491px;
    height: 32px;
    margin: 0 0 1px 323px;
    background: #000;
}
.notes {
    height: 18px;
    background: #fff;
    border-bottom: 1px solid #ababab;
}
.status {
    height: 30px;
    margin-top: 4px;
    padding: 5px 0 0 1px;
    border-top: 1px solid #c0c0c0;
    background: linear-gradient(#e6e6e6 2px, #c0c0c0 2px, #c0c0c0 3px, #f1f1f1 3px);
    font-size: 12px;
    line-height: 20px;
}

/* taskbar */
.taskbar {
    display: flex;
    height: 50px;
    background: #232a26;
    overflow: hidden;
}
.search {
    display: flex;
    align-items: center;
    justify-content: space-between;
    flex: none;
    width: 173px;
    margin-right: 3px;
    padding-right: 6px;
    background: #f2f2f2;
    border: 1px solid #c0c0c0;
    border-left: 0;
    font-size: 18px;
    color: #333;
}
.taskbar button {
    flex: none;
    position: relative;
    justify-content: center;
    width: 62px;
}
.taskbar button::after {
    content: "";
    position: absolute;
    left: 5px;
    right: 5px;
    bottom: 0;
    height: 3px;
}
.taskbar .open::after, .taskbar .active::after {
    background: #76b9ed;
}
.taskbar .active {
    background: #515753;
}
.taskbar .active::after, .taskbar .alert::after {
    left: 0;
    right: 0;
}
.taskbar .alert {
    background: #a86227;
}
.taskbar .alert::after {
    background: #ff7b00;
}
.app text {
    font-size: 14px;
    font-weight: bold;
    fill: #fff;
}
.word text {
    font-size: 12px;
}
.zoom text {
    font-size: 9px;
    font-weight: bold;
    fill: #fff;
}
.player text {
    font-size: 6px;
    font-weight: bold;
    fill: #222;
}
```
